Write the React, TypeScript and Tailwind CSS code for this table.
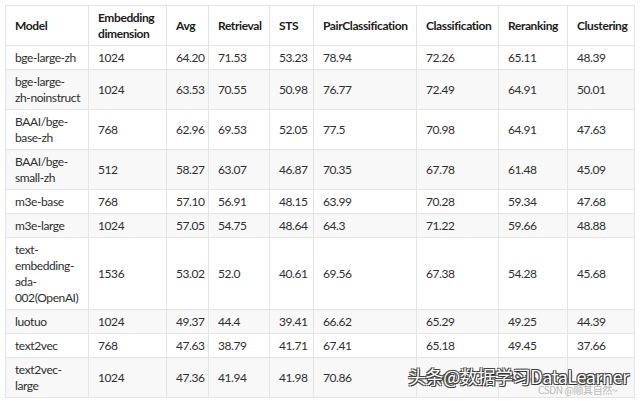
const COLS = [83, 78, 42, 61, 44, 103, 82, 69, 67];

const HEAD = [
    'Model',
    'Embedding dimension',
    'Avg',
    'Retrieval',
    'STS',
    'PairClassification',
    'Classification',
    'Reranking',
    'Clustering',
];

// \u2060 keeps "zh-noinstruct" together, as in the source table
const ROWS: string[][] = [
    ['bge-large-zh', '1024', '64.20', '71.53', '53.23', '78.94', '72.26', '65.11', '48.39'],
    ['bge-large-zh-\u2060noinstruct', '1024', '63.53', '70.55', '50.98', '76.77', '72.49', '64.91', '50.01'],
    ['BAAI/bge-base-zh', '768', '62.96', '69.53', '52.05', '77.5', '70.98', '64.91', '47.63'],
    ['BAAI/bge-small-zh', '512', '58.27', '63.07', '46.87', '70.35', '67.78', '61.48', '45.09'],
    ['m3e-base', '768', '57.10', '56.91', '48.15', '63.99', '70.28', '59.34', '47.68'],
    ['m3e-large', '1024', '57.05', '54.75', '48.64', '64.3', '71.22', '59.66', '48.88'],
    ['text-embedding-ada-002(OpenAI)', '1536', '53.02', '52.0', '40.61', '69.56', '67.38', '54.28', '45.68'],
    ['luotuo', '1024', '49.37', '44.4', '39.41', '66.62', '65.29', '49.25', '44.39'],
    ['text2vec', '768', '47.63', '38.79', '41.71', '67.41', '65.18', '49.45', '37.66'],
    ['text2vec-large', '1024', '47.36', '41.94', '41.98', '70.86', '65.02', '49.16', '30.02'],
];

export default function App() {
    return (
        <div className="relative h-[401px] w-[640px] overflow-hidden bg-white font-['Lato',sans-serif] text-[12px] leading-4 tracking-[-0.4px] text-[#2e2e2e]">
            <div className="pt-[5px] pl-[5px]">
                <table className="w-[629px] table-fixed border-collapse">
                    <colgroup>
                        {COLS.map((w, i) => (
                            <col key={i} style={{ width: w }} />
                        ))}
                    </colgroup>
                    <thead>
                        <tr className="h-10 bg-white">
                            {HEAD.map((h) => (
                                <th
                                    key={h}
                                    className="border border-[#e4e4e4] px-[9px] py-[3.5px] text-left align-middle font-bold text-[#1a1a1a]"
                                >
                                    {h}
                                </th>
                            ))}
                        </tr>
                    </thead>
                    <tbody>
                        {ROWS.map((r, i) => (
                            <tr key={r[0]} className={i % 2 ? 'bg-[#f8f8f8]' : 'bg-white'}>
                                {r.map((c, j) => (
                                    <td
                                        key={j}
                                        className="border border-[#e4e4e4] px-[9px] py-[3.5px] align-middle"
                                    >
                                        {c}
                                    </td>
                                ))}
                            </tr>
                        ))}
                    </tbody>
                </table>
            </div>

            {/* watermark over the last row */}
            <div className="absolute top-[366px] left-[408px] font-['Noto_Sans_CJK_SC',sans-serif] text-[18px] leading-5 whitespace-nowrap text-white [text-shadow:1px_1px_0_#333,-1px_-1px_0_#444,1px_-1px_0_#555,-1px_1px_0_#555]">
                头条@数据学习DataLearner
            </div>
            <div className="absolute top-[384px] left-[538px] font-['Noto_Sans_CJK_SC',sans-serif] text-[10px] leading-3 whitespace-nowrap text-[#bbb]">
                CSDN @顺其自然~
            </div>
        </div>
    );
}
